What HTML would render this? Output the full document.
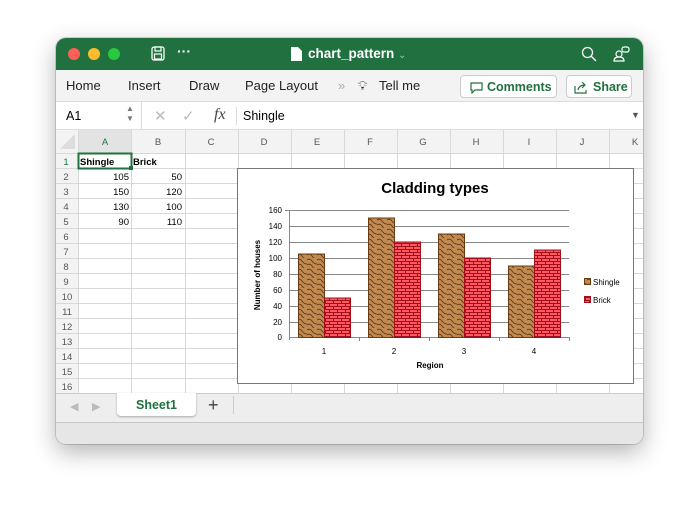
<!DOCTYPE html>
<html><head><meta charset="utf-8"><style>
*{box-sizing:border-box;margin:0;padding:0}
body{width:699px;height:518px;background:#fff;font-family:"Liberation Sans",sans-serif;position:relative;overflow:hidden}
.win{position:absolute;left:56px;top:38px;width:587px;height:406px;border-radius:10px;overflow:hidden;background:#fff;box-shadow:0 8px 24px rgba(0,0,0,.3),0 0 0 1px rgba(0,0,0,.15)}
.title{position:absolute;left:0;top:0;width:587px;height:32px;background:#21703f;color:#fff}
.dot{position:absolute;top:10px;width:12px;height:12px;border-radius:50%}
.ribbon{position:absolute;top:32px;left:0;width:587px;height:31px;background:#f3f3f3;font-size:13px;color:#222}
.ribbon span{position:absolute;top:8px}
.btn{position:absolute;top:5px;height:23px;border:1px solid #ccc;border-radius:4px;background:#fff;color:#21703f;font-weight:bold;font-size:12.5px;padding:4px 0 0 26px}
.fbar{position:absolute;top:63px;left:0;width:587px;height:29px;background:#fff;border-top:1px solid #ddd;border-bottom:1px solid #ddd;font-size:12.5px}
.grid{position:absolute;top:92px;left:0}
</style></head><body>
<div class="win">
<div class="title">
<div class="dot" style="left:12px;background:#fe5f57"></div>
<div class="dot" style="left:32px;background:#febc2e"></div>
<div class="dot" style="left:52px;background:#28c840"></div>
<svg style="position:absolute;left:95px;top:8px" width="14" height="15"><rect x="1" y="1" width="12" height="13" rx="2" fill="none" stroke="#fff" stroke-width="1.3"/><rect x="4" y="1" width="6" height="4" fill="none" stroke="#fff" stroke-width="1.2"/><rect x="3.5" y="8" width="7" height="5" fill="none" stroke="#fff" stroke-width="1.2"/></svg>
<div style="position:absolute;left:121px;top:5px;font-size:14px;font-weight:bold">···</div>
<svg style="position:absolute;left:235px;top:9px" width="11" height="14"><path d="M0 0H7L11 4V14H0Z" fill="#fff"/></svg>
<div style="position:absolute;left:252px;top:8px;font-size:13.5px;font-weight:bold">chart_pattern <span style="font-weight:normal;color:#9fc6ad;font-size:10px">⌄</span></div>
<svg style="position:absolute;left:525px;top:8px" width="16" height="16"><circle cx="6.5" cy="6.5" r="5" fill="none" stroke="#fff" stroke-width="1.3"/><path d="M10 10L15 15" stroke="#fff" stroke-width="1.4"/></svg>
<svg style="position:absolute;left:557px;top:7px" width="18" height="18"><circle cx="6" cy="9" r="3" fill="none" stroke="#fff" stroke-width="1.2"/><path d="M1 16Q1 12 6 12Q11 12 11 16Z" fill="none" stroke="#fff" stroke-width="1.2"/><rect x="9" y="2" width="7" height="5" rx="2" fill="none" stroke="#fff" stroke-width="1.2"/></svg>
</div>
<div class="ribbon">
<span style="left:10px">Home</span><span style="left:72px">Insert</span><span style="left:133px">Draw</span><span style="left:189px">Page Layout</span>
<span style="left:282px;color:#aaa">»</span><span style="left:302px">💡︎</span><span style="left:323px">Tell me</span>
<div class="btn" style="left:404px;width:97px">Comments<svg style="position:absolute;left:9px;top:6px" width="13" height="12"><path d="M1 1H12V8H5L2 11V8H1Z" fill="none" stroke="#21703f" stroke-width="1.2"/></svg></div>
<div class="btn" style="left:510px;width:66px">Share<svg style="position:absolute;left:7px;top:5px" width="14" height="13"><path d="M1 5V12H12V9M4 9Q5 4 11 4M8 1L11 4L8 7" fill="none" stroke="#21703f" stroke-width="1.2"/></svg></div>
</div>
<div class="fbar">
<span style="position:absolute;left:10px;top:7px">A1</span>
<span style="position:absolute;left:70px;top:2px;font-size:8px;color:#777;line-height:10px">▲<br>▼</span>
<div style="position:absolute;left:85px;top:0;width:1px;height:28px;background:#ddd"></div>
<span style="position:absolute;left:98px;top:5px;color:#bbb;font-size:15px">✕</span>
<span style="position:absolute;left:126px;top:5px;color:#bbb;font-size:15px">✓</span>
<span style="position:absolute;left:158px;top:4px;font-family:'Liberation Serif',serif;font-style:italic;font-size:16px;color:#444">fx</span>
<div style="position:absolute;left:180px;top:5px;width:1px;height:18px;background:#ddd"></div>
<span style="position:absolute;left:187px;top:7px">Shingle</span>
<span style="position:absolute;left:575px;top:8px;font-size:9px;color:#555">▼</span>
</div>
<svg class="grid" width="587" height="263" font-family="Liberation Sans" font-size="9.5">
<rect x="0" y="0" width="587" height="23" fill="#f3f3f3"/>
<rect x="0" y="0" width="22" height="263" fill="#f3f3f3"/>
<path d="M4 19L19 19L19 4Z" fill="#ddd"/>
<rect x="22" y="0" width="53" height="23" fill="#e3e3e3"/>
<g stroke="#d8d8d8" stroke-width="1">
<path d="M22.5 0V263M75.5 0V263M129.5 0V263M182.5 0V263M235.5 0V263M288.5 0V263M341.5 0V263M394.5 0V263M447.5 0V263M500.5 0V263M553.5 0V263"/>
<path d="M0 23.5H587M0 38.5H587M0 53.5H587M0 68.5H587M0 83.5H587M0 98.5H587M0 113.5H587M0 128.5H587M0 143.5H587M0 158.5H587M0 173.5H587M0 188.5H587M0 203.5H587M0 218.5H587M0 233.5H587M0 248.5H587"/>
</g>
<g fill="#555" text-anchor="middle">
<text x="49" y="15" fill="#21703f">A</text><text x="102" y="15">B</text><text x="155" y="15">C</text><text x="208" y="15">D</text><text x="261" y="15">E</text><text x="314" y="15">F</text><text x="367" y="15">G</text><text x="420" y="15">H</text><text x="473" y="15">I</text><text x="526" y="15">J</text><text x="579" y="15">K</text>
<text x="10" y="35" fill="#21703f">1</text><text x="10" y="50">2</text><text x="10" y="65">3</text><text x="10" y="80">4</text><text x="10" y="95">5</text><text x="10" y="110">6</text><text x="10" y="125">7</text><text x="10" y="140">8</text><text x="10" y="155">9</text><text x="11" y="170">10</text><text x="11" y="185">11</text><text x="11" y="200">12</text><text x="11" y="215">13</text><text x="11" y="230">14</text><text x="11" y="245">15</text><text x="11" y="260">16</text>
</g>
<g font-weight="bold"><text x="24" y="35">Shingle</text><text x="77" y="35">Brick</text></g>
<g text-anchor="end"><text x="73" y="50">105</text><text x="126" y="50">50</text><text x="73" y="65">150</text><text x="126" y="65">120</text><text x="73" y="80">130</text><text x="126" y="80">100</text><text x="73" y="95">90</text><text x="126" y="95">110</text></g>
<rect x="22.5" y="23.5" width="53" height="15" fill="none" stroke="#21703f" stroke-width="2"/>
<rect x="73" y="36" width="4" height="4" fill="#21703f"/>
</svg>
<svg style="position:absolute;left:181px;top:130px" width="397" height="216" font-family="Liberation Sans">
<defs>
<pattern id="br" width="8" height="6" patternUnits="userSpaceOnUse"><rect width="8" height="6" fill="#ff5a64"/><path d="M0 .5H8M0 3.5H8M0.5 0V3M4.5 3V6" stroke="#a0101a" stroke-width="1"/></pattern>
<pattern id="sh" width="10" height="10" patternUnits="userSpaceOnUse"><rect width="10" height="10" fill="#c08a52"/><path d="M0 2Q3 0 5 3T10 6M0 7Q3 5 5 8T10 11M-5 4Q0 2 0 -1" fill="none" stroke="#5a3410" stroke-width=".8"/></pattern>
</defs>
<rect x="0.5" y="0.5" width="396" height="215" fill="#fff" stroke="#777"/>
<text x="198" y="25" text-anchor="middle" font-size="15" font-weight="bold">Cladding types</text>
<g stroke="#888" stroke-width="1">
<path d="M52 42.5H332M52 58.5H332M52 74.5H332M52 90.5H332M52 106.5H332M52 122.5H332M52 138.5H332M52 154.5H332M52 169.5H332"/>
<path d="M52.5 42V172M122.5 169V173M192.5 169V173M262.5 169V173M332.5 169V173M48 42.5H52"/>
</g>
<g font-size="8" text-anchor="end"><text x="45" y="45">160</text><text x="45" y="61">140</text><text x="45" y="77">120</text><text x="45" y="93">100</text><text x="45" y="109">80</text><text x="45" y="125">60</text><text x="45" y="141">40</text><text x="45" y="157">20</text><text x="45" y="172">0</text></g>
<g stroke="#6a3a10" stroke-width="1">
<rect x="61.5" y="86" width="26" height="83.5" fill="url(#sh)"/><rect x="131.5" y="50" width="26" height="119.5" fill="url(#sh)"/><rect x="201.5" y="66" width="26" height="103.5" fill="url(#sh)"/><rect x="271.5" y="98" width="26" height="71.5" fill="url(#sh)"/>
</g>
<g stroke="#a0101a" stroke-width="1">
<rect x="87.5" y="130" width="26" height="39.5" fill="url(#br)"/><rect x="157.5" y="74" width="26" height="95.5" fill="url(#br)"/><rect x="227.5" y="90" width="26" height="79.5" fill="url(#br)"/><rect x="297.5" y="82" width="26" height="87.5" fill="url(#br)"/>
</g>
<g font-size="8" text-anchor="middle"><text x="87" y="186">1</text><text x="157" y="186">2</text><text x="227" y="186">3</text><text x="297" y="186">4</text>
<text x="193" y="200" font-weight="bold">Region</text></g>
<text transform="translate(23,107) rotate(-90)" text-anchor="middle" font-size="8" font-weight="bold">Number of houses</text>
<rect x="347.5" y="110.5" width="6" height="6" fill="url(#sh)" stroke="#6a3a10"/><text x="356" y="117" font-size="8">Shingle</text>
<rect x="347.5" y="128.5" width="6" height="6" fill="url(#br)" stroke="#a0101a"/><text x="356" y="135" font-size="8">Brick</text>
</svg>
<div style="position:absolute;top:355px;left:0;width:587px;height:29px;background:#eeeeee;border-top:1px solid #ccc"></div>
<span style="position:absolute;left:14px;top:362px;color:#bbb;font-size:11px">◀</span><span style="position:absolute;left:36px;top:362px;color:#bbb;font-size:11px">▶</span>
<div style="position:absolute;left:61px;top:355px;width:79px;height:23px;background:#fff;border-radius:0 0 4px 4px;box-shadow:0 1px 2px rgba(0,0,0,.3);color:#21703f;font-weight:bold;font-size:12.5px;text-align:center;padding-top:5px">Sheet1</div>
<span style="position:absolute;left:152px;top:357px;font-size:18px;color:#444">+</span>
<div style="position:absolute;left:177px;top:358px;width:1px;height:18px;background:#ccc"></div>
<div style="position:absolute;top:384px;left:0;width:587px;height:22px;background:#e6e6e6;border-top:1px solid #c8c8c8"></div>
</div>
</body></html>
